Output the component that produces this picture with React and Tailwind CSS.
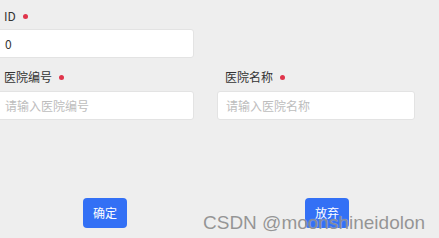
export default function App() {
  const font = { fontFamily: '"Microsoft YaHei", "Noto Sans CJK SC", "Noto Sans", sans-serif' };
  const Dot = () => <span className="ml-[7px] inline-block w-[5px] h-[5px] rounded-full bg-[#e0344b]" />;
  return (
    <div className="relative w-[439px] h-[238px] overflow-hidden bg-[#eeeeee]" style={font}>
      <div className="ml-[-4px] pt-[7px]">
        <div className="w-[198px]">
          <div className="flex items-center h-[18px] pl-[8px] text-[12px] text-[#333]">
            ID<Dot />
          </div>
          <div className="mt-[4px] h-[29px] bg-white border border-[#e3e3e3] rounded-[3px] flex items-center pl-[8px] text-[12px] text-[#333]">
            0
          </div>
        </div>
        <div className="mt-[10px] flex gap-[23px]">
          <div className="w-[198px]">
            <div className="flex items-center h-[18px] pl-[8px] text-[12px] text-[#333]">
              医院编号<Dot />
            </div>
            <div className="mt-[5px] h-[29px] bg-white border border-[#e3e3e3] rounded-[3px] flex items-center pl-[8px] text-[12px] text-[#bdbdbd]">
              请输入医院编号
            </div>
          </div>
          <div className="w-[198px]">
            <div className="flex items-center h-[18px] pl-[8px] text-[12px] text-[#333]">
              医院名称<Dot />
            </div>
            <div className="mt-[5px] h-[29px] bg-white border border-[#e3e3e3] rounded-[3px] flex items-center pl-[8px] text-[12px] text-[#bdbdbd]">
              请输入医院名称
            </div>
          </div>
        </div>
      </div>
      <div className="ml-[-6px] w-[444px] mt-[78px] flex">
        <div className="flex-1 flex justify-center">
          <button className="w-[44px] h-[30px] rounded-[4px] bg-[#3370f5] text-white text-[12px]">确定</button>
        </div>
        <div className="flex-1 flex justify-center">
          <button className="w-[44px] h-[30px] rounded-[4px] bg-[#3370f5] text-white text-[12px]">放弃</button>
        </div>
      </div>
      <div
        className="absolute left-[203px] top-[209px] text-[19px] leading-normal text-[#8c8c8c] opacity-90 whitespace-nowrap"
        style={{ fontFamily: '"Liberation Sans", Arial, sans-serif', textShadow: '0 0 1px rgba(255,255,255,0.6)' }}
      >
        CSDN @moonshineidolon
      </div>
    </div>
  );
}
